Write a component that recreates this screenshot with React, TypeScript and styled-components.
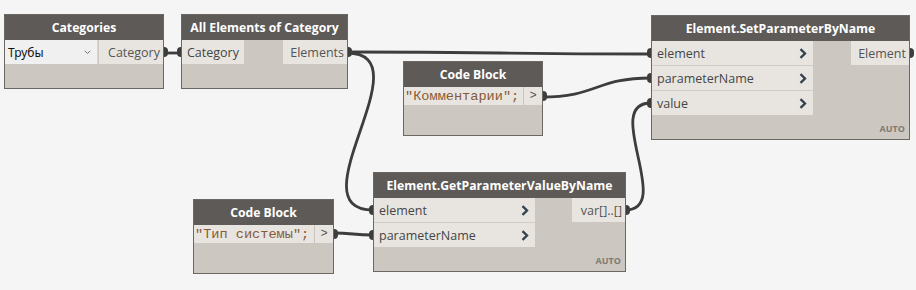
import React, { ReactElement } from "react"
import styled, { createGlobalStyle } from "styled-components"

// ************
// types
// ************

type Port_I = {
	label: string
	chevron?: boolean
}

type NodeProps_I = {
	x: number
	y: number
	w: number
	h: number
	title: string
	inputs?: Port_I[]
	inputWidth?: number
	output?: string
	outputWidth?: number
	auto?: boolean
	children?: React.ReactNode
}

// ************
// data
// ************

const wires: string[] = [
	"M163,53 L181,53",
	"M347,52 C500,52 500,54 651,54",
	"M347,53 C427,53 293,210 373,210",
	"M542,97 C597,97 596,78 651,78",
	"M333,233 C353,233 353,235 373,235",
	"M625,210 C675,210 601,103 651,103",
]

// ************
// parts
// ************

function Chevron(): ReactElement {
	return (
		<svg width="8" height="11" viewBox="0 0 8 11">
			<path d="M1.5 1.2 L6 5.5 L1.5 9.8" fill="none" stroke="#33404d" strokeWidth="2.3" />
		</svg>
	)
}

function Node({ x, y, w, h, title, inputs, inputWidth, output, outputWidth, auto, children }: NodeProps_I): ReactElement {
	return (
		<NodeBox $x={x} $y={y} $w={w} $h={h}>
			<Header>{title}</Header>
			{children ? (
				children
			) : (
				<Ports>
					<InputCol $w={inputWidth || 0}>
						{(inputs || []).map((p) => (
							<InputRow key={p.label}>
								<InConnector />
								<span>{p.label}</span>
								{p.chevron && <Chevron />}
							</InputRow>
						))}
					</InputCol>
					{output && (
						<OutputCell $w={outputWidth || 0}>
							{output}
							<OutConnector />
						</OutputCell>
					)}
				</Ports>
			)}
			{auto && <Footer>AUTO</Footer>}
		</NodeBox>
	)
}

function CodeBlock({ x, y, w, code }: { x: number; y: number; w: number; code: string }): ReactElement {
	return (
		<Node x={x} y={y} w={w} h={75} title="Code Block">
			<Ports>
				<CodeLine>{code}</CodeLine>
				<CodeOut>
					&gt;
					<OutConnector />
				</CodeOut>
			</Ports>
		</Node>
	)
}

// ************
// component
// ************

export default function App(): ReactElement {
	return (
		<Canvas>
			<GlobalStyle />
			<Wires width="916" height="290">
				{wires.map((d) => (
					<path key={d} d={d} fill="none" stroke="#3d3d3d" strokeWidth="2.8" />
				))}
			</Wires>

			<Node x={4} y={14} w={160} h={75} title="Categories">
				<Ports>
					<Dropdown>
						<span>Трубы</span>
						<svg width="7" height="5" viewBox="0 0 7 5">
							<path d="M0.8 0.8 L3.5 3.6 L6.2 0.8" fill="none" stroke="#777" strokeWidth="1" />
						</svg>
					</Dropdown>
					<OutputCell $w={64}>
						Category
						<OutConnector />
					</OutputCell>
				</Ports>
			</Node>

			<Node
				x={181}
				y={14}
				w={167}
				h={75}
				title="All Elements of Category"
				inputs={[{ label: "Category" }]}
				inputWidth={62}
				output="Elements"
				outputWidth={64}
			/>

			<CodeBlock x={403} y={61} w={140} code={'"Комментарии";'} />

			<Node
				x={651}
				y={15}
				w={259}
				h={125}
				title="Element.SetParameterByName"
				inputs={[
					{ label: "element", chevron: true },
					{ label: "parameterName", chevron: true },
					{ label: "value", chevron: true },
				]}
				inputWidth={161}
				output="Element"
				outputWidth={58}
				auto
			/>

			<CodeBlock x={193} y={199} w={141} code={'"Тип системы";'} />

			<Node
				x={373}
				y={172}
				w={253}
				h={100}
				title="Element.GetParameterValueByName"
				inputs={[
					{ label: "element", chevron: true },
					{ label: "parameterName", chevron: true },
				]}
				inputWidth={161}
				output="var[]..[]"
				outputWidth={53}
				auto
			/>
		</Canvas>
	)
}

// ************
// styles
// ************

const GlobalStyle = createGlobalStyle`
	html, body {
		margin: 0;
		padding: 0;
		background: #f5f5f5;
	}
	body {
		font-family: "Open Sans", "Noto Sans", sans-serif;
	}
`
const Canvas = styled.div`
	position: relative;
	width: 916px;
	height: 290px;
	overflow: hidden;
	background: #f5f5f5;
`
const Wires = styled.svg`
	position: absolute;
	left: 0;
	top: 0;
`
const NodeBox = styled.div<{ $x: number; $y: number; $w: number; $h: number }>`
	position: absolute;
	left: ${({ $x }) => $x}px;
	top: ${({ $y }) => $y}px;
	width: ${({ $w }) => $w}px;
	height: ${({ $h }) => $h}px;
	box-sizing: border-box;
	display: flex;
	flex-direction: column;

	border: 1px solid #6b6864;
	background: #ccc8c1;
`
const Header = styled.div`
	display: flex;
	justify-content: center;
	align-items: center;
	height: 25px;
	flex: none;

	background: #5d5a57;
	color: #ffffff;
	font-size: 12.2px;
	font-weight: 700;
	white-space: nowrap;
`
const Ports = styled.div`
	display: flex;
	justify-content: space-between;
	align-items: flex-start;
`
const InputCol = styled.div<{ $w: number }>`
	display: flex;
	flex-direction: column;
	width: ${({ $w }) => $w}px;
`
const InputRow = styled.div`
	position: relative;
	display: flex;
	justify-content: space-between;
	align-items: center;
	height: 24px;
	padding: 0 6px 0 5px;
	border-bottom: 1px solid #d2cec7;

	background: #e8e5e0;
	color: #454545;
	font-size: 12.5px;

	&:last-child {
		border-bottom: none;
	}
`
const OutputCell = styled.div<{ $w: number }>`
	position: relative;
	display: flex;
	justify-content: flex-end;
	align-items: center;
	box-sizing: border-box;
	width: ${({ $w }) => $w}px;
	height: 24px;
	padding-right: 3px;

	background: #e8e5e0;
	color: #555555;
	font-size: 12.5px;
	white-space: nowrap;
`
const InConnector = styled.i`
	position: absolute;
	left: -5px;
	top: 7px;
	width: 4px;
	height: 10px;
	border-radius: 5px 0 0 5px;
	background: #3d3d3d;
`
const OutConnector = styled.i`
	position: absolute;
	right: -5px;
	top: 50%;
	width: 4px;
	height: 10px;
	margin-top: -5px;
	border-radius: 0 5px 5px 0;
	background: #3d3d3d;
`
const Dropdown = styled.div`
	display: flex;
	justify-content: space-between;
	align-items: center;
	box-sizing: border-box;
	width: 93px;
	height: 24px;
	padding: 0 6px 0 3px;
	border-right: 1px solid #d5d5d5;

	background: #f0f0f0;
	color: #111111;
	font-family: "Noto Sans", sans-serif;
	font-size: 12px;
`
const CodeLine = styled.div`
	display: flex;
	align-items: center;
	flex: 1;
	height: 18px;
	padding-left: 1px;

	background: #e8e5e0;
	color: #875a36;
	font-family: "Liberation Mono", "DejaVu Sans Mono", monospace;
	font-size: 13.6px;
	white-space: nowrap;
`
const CodeOut = styled.div`
	position: relative;
	display: flex;
	justify-content: center;
	align-items: center;
	width: 18px;
	height: 18px;
	border-left: 1px solid #c9c5be;

	background: #e8e5e0;
	color: #555555;
	font-family: "Liberation Mono", monospace;
	font-size: 12px;
`
const Footer = styled.div`
	margin-top: auto;
	padding: 0 4px 4px 0;

	color: #7f7a74;
	font-size: 9px;
	font-weight: 700;
	text-align: right;
`
